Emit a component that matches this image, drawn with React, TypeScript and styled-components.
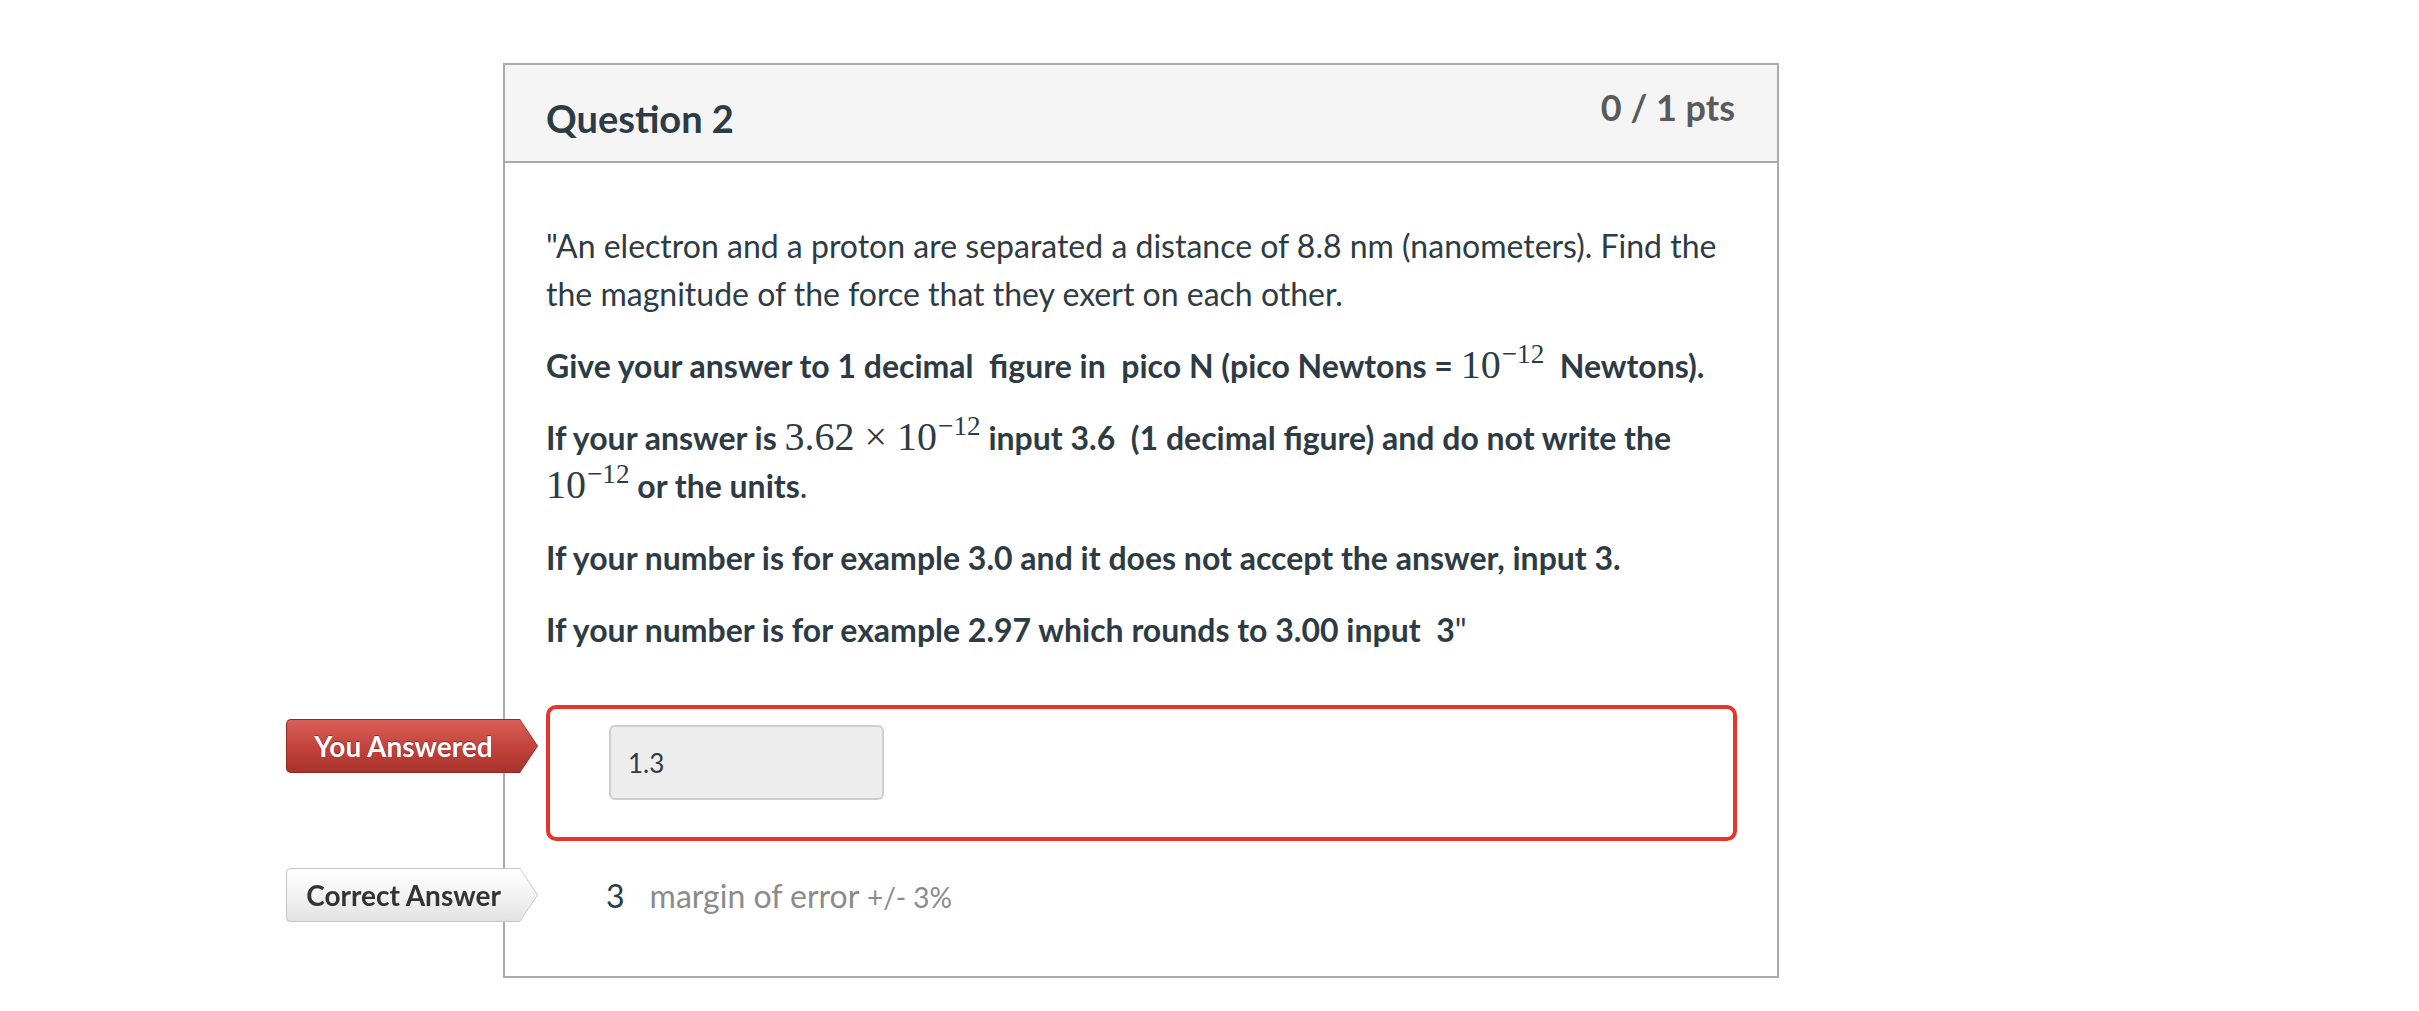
import React from "react"
import styled, { createGlobalStyle } from "styled-components"

const GlobalStyle = createGlobalStyle`
  html, body {
    margin: 0;
    padding: 0;
    background: #ffffff;
  }
  body {
    font-family: Lato, "Open Sans", "Liberation Sans", sans-serif;
    color: #2d3b45;
  }
`

const Page = styled.div`
  padding: 63px 0 34px 503px;
`

const Card = styled.section`
  width: 1276px;
  box-sizing: border-box;
  border: 2px solid #aaaaaa;
  background: #ffffff;
`

const Header = styled.header`
  height: 96px;
  display: flex;
  justify-content: space-between;
  align-items: flex-start;
  padding: 0 42px 0 41px;
  background: #f5f5f5;
  border-bottom: 2px solid #aaaaaa;
`

const Title = styled.h2`
  margin: 34px 0 0;
  font-size: 38px;
  line-height: 38px;
  font-weight: 700;
  color: #2d3b45;
`

const Points = styled.div`
  margin-top: 24px;
  font-size: 36px;
  line-height: 36px;
  font-weight: 700;
  color: #5a5a5a;
`

const Body = styled.div`
  padding: 35px 40px 55px 41px;
`

const Para = styled.p<{ bold?: boolean }>`
  margin: 24px 0;
  font-size: 32px;
  line-height: 48px;
  font-weight: ${(props) => (props.bold ? 700 : 400)};
`

const Plain = styled.span`
  font-weight: 400;
`

const Math = styled.span`
  font-family: "Liberation Serif", "DejaVu Serif", serif;
  font-weight: 400;
  font-size: 40px;
  line-height: 40px;
`

const Sup = styled.span`
  font-size: 0.68em;
  vertical-align: 0.55em;
  line-height: 0;
  margin-left: 1px;
`

const Answers = styled.div`
  margin-top: 51px;
`

const AnswerRow = styled.div`
  position: relative;
`

const ArrowLabel = styled.div<{ tone: "wrong" | "correct"; top: number }>`
  position: absolute;
  left: -260px;
  top: ${(props) => props.top}px;
  width: 252px;
  height: 54px;
  box-sizing: border-box;
  padding: 1px;
  border-radius: 5px 0 0 5px;
  background: ${(props) => (props.tone === "wrong" ? "#952823" : "#c6c6c6")};
  clip-path: polygon(0 0, calc(100% - 18px) 0, 100% 50%, calc(100% - 18px) 100%, 0 100%);
  filter: drop-shadow(0 1px 1px rgba(0, 0, 0, 0.15));
`

const ArrowFace = styled.div<{ tone: "wrong" | "correct" }>`
  height: 100%;
  display: flex;
  align-items: center;
  justify-content: center;
  padding-right: 17px;
  box-sizing: border-box;
  border-radius: 4px 0 0 4px;
  clip-path: polygon(0 0, calc(100% - 17px) 0, 100% 50%, calc(100% - 17px) 100%, 0 100%);
  background: ${(props) =>
    props.tone === "wrong"
      ? "linear-gradient(to bottom, #d9605a 0%, #c4443d 50%, #a9322c 100%)"
      : "linear-gradient(to bottom, #ffffff 0%, #f3f3f3 50%, #e2e2e2 100%)"};
  color: ${(props) => (props.tone === "wrong" ? "#ffffff" : "#333333")};
  text-shadow: ${(props) =>
    props.tone === "wrong" ? "0 -1px 0 rgba(0, 0, 0, 0.35)" : "none"};
  font-size: 28px;
  font-weight: 700;
  white-space: nowrap;
`

const WrongBox = styled.div`
  border: 4px solid #e8352b;
  border-radius: 10px;
  padding: 16px 0 37px 59px;
`

const AnswerInput = styled.div`
  width: 275px;
  height: 75px;
  box-sizing: border-box;
  display: flex;
  align-items: center;
  padding-left: 17px;
  background: #ededed;
  border: 2px solid #cfcfcf;
  border-radius: 6px;
  font-size: 26px;
  color: #2d3b45;
`

const CorrectRow = styled(AnswerRow)`
  margin-top: 27px;
  padding: 4px 0 0 60px;
  font-size: 32px;
  line-height: 48px;
`

const CorrectValue = styled.span`
  color: #2d3b45;
`

const Margin = styled.span`
  margin-left: 25px;
  color: #8b8b8b;
`

const MarginValue = styled.span`
  font-size: 28px;
`

const App: React.FC = () => {
  return (
    <Page>
      <GlobalStyle />
      <Card>
        <Header>
          <Title>Question 2</Title>
          <Points>0 / 1 pts</Points>
        </Header>
        <Body>
          <Para>
            "An electron and a proton are separated a distance of 8.8 nm
            (nanometers). Find the the magnitude of the force that they exert on
            each other.
          </Para>
          <Para bold>
            Give your answer to 1 decimal&nbsp; figure in&nbsp; pico N (pico
            Newtons ={" "}
            <Math>
              10<Sup>−12</Sup>
            </Math>
            &nbsp; Newtons).
          </Para>
          <Para bold>
            If your answer is{" "}
            <Math>
              3.62 × 10<Sup>−12</Sup>
            </Math>{" "}
            input 3.6&nbsp; (1 decimal figure) and do not write the{" "}
            <Math>
              10<Sup>−12</Sup>
            </Math>{" "}
            or the units<Plain>.</Plain>
          </Para>
          <Para bold>
            If your number is for example 3.0 and it does not accept the answer,
            input 3.
          </Para>
          <Para bold>
            If your number is for example 2.97 which rounds to 3.00 input&nbsp; 3
            <Plain>"</Plain>
          </Para>
          <Answers>
            <AnswerRow>
              <ArrowLabel tone="wrong" top={14}>
                <ArrowFace tone="wrong">You Answered</ArrowFace>
              </ArrowLabel>
              <WrongBox>
                <AnswerInput>1.3</AnswerInput>
              </WrongBox>
            </AnswerRow>
            <CorrectRow>
              <ArrowLabel tone="correct" top={0}>
                <ArrowFace tone="correct">Correct Answer</ArrowFace>
              </ArrowLabel>
              <CorrectValue>3</CorrectValue>
              <Margin>
                margin of error <MarginValue>+/- 3%</MarginValue>
              </Margin>
            </CorrectRow>
          </Answers>
        </Body>
      </Card>
    </Page>
  )
}

export default App
